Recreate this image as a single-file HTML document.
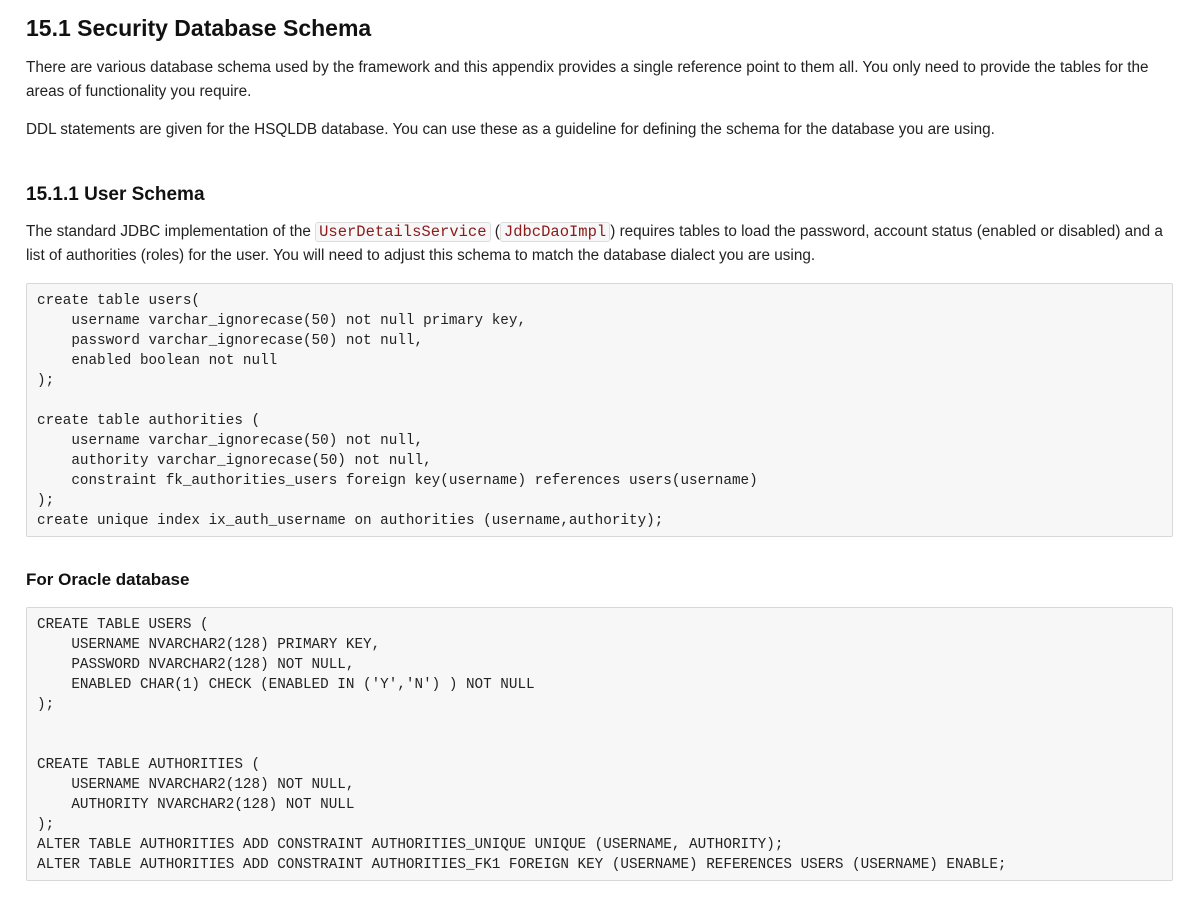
<!DOCTYPE html>
<html><head><style>
body{margin:0;background:#fff;width:1200px;height:900px;overflow:hidden;font-family:"Liberation Sans",sans-serif;color:#222;position:relative}
.a{position:absolute;left:26px;margin:0;white-space:nowrap}
p.a{font-size:15.3px;line-height:24px}
h1{font-size:23px;font-weight:bold;color:#111}
h2{font-size:19px;font-weight:bold;color:#111}
h3{font-size:17px;font-weight:bold;color:#111}
pre{position:absolute;left:26px;width:1135px;margin:0;padding:7px 0 5px 10px;background:#f7f7f7;border:1px solid #d8d8d8;border-radius:2px;font-family:"Liberation Mono",monospace;font-size:14.3px;line-height:20px;color:#222}
code{font-family:"Liberation Mono",monospace;font-size:15.5px;color:#8b1a1a;background:#f7f7f7;border:1px solid #ddd;border-radius:3px;padding:0 3px}
</style></head><body>
<h1 class="a" style="top:15px">15.1 Security Database Schema</h1>
<p class="a" style="top:56px">There are various database schema used by the framework and this appendix provides a single reference point to them all. You only need to provide the tables for the<br>areas of functionality you require.</p>
<p class="a" style="top:118px">DDL statements are given for the HSQLDB database. You can use these as a guideline for defining the schema for the database you are using.</p>
<h2 class="a" style="top:184px">15.1.1 User Schema</h2>
<p class="a" style="top:220px">The standard JDBC implementation of the <code>UserDetailsService</code> (<code>JdbcDaoImpl</code>) requires tables to load the password, account status (enabled or disabled) and a<br>list of authorities (roles) for the user. You will need to adjust this schema to match the database dialect you are using.</p>
<pre style="top:283px">create table users(
    username varchar_ignorecase(50) not null primary key,
    password varchar_ignorecase(50) not null,
    enabled boolean not null
);

create table authorities (
    username varchar_ignorecase(50) not null,
    authority varchar_ignorecase(50) not null,
    constraint fk_authorities_users foreign key(username) references users(username)
);
create unique index ix_auth_username on authorities (username,authority);</pre>
<h3 class="a" style="top:570px">For Oracle database</h3>
<pre style="top:607px">CREATE TABLE USERS (
    USERNAME NVARCHAR2(128) PRIMARY KEY,
    PASSWORD NVARCHAR2(128) NOT NULL,
    ENABLED CHAR(1) CHECK (ENABLED IN ('Y','N') ) NOT NULL
);


CREATE TABLE AUTHORITIES (
    USERNAME NVARCHAR2(128) NOT NULL,
    AUTHORITY NVARCHAR2(128) NOT NULL
);
ALTER TABLE AUTHORITIES ADD CONSTRAINT AUTHORITIES_UNIQUE UNIQUE (USERNAME, AUTHORITY);
ALTER TABLE AUTHORITIES ADD CONSTRAINT AUTHORITIES_FK1 FOREIGN KEY (USERNAME) REFERENCES USERS (USERNAME) ENABLE;</pre>
</body></html>
